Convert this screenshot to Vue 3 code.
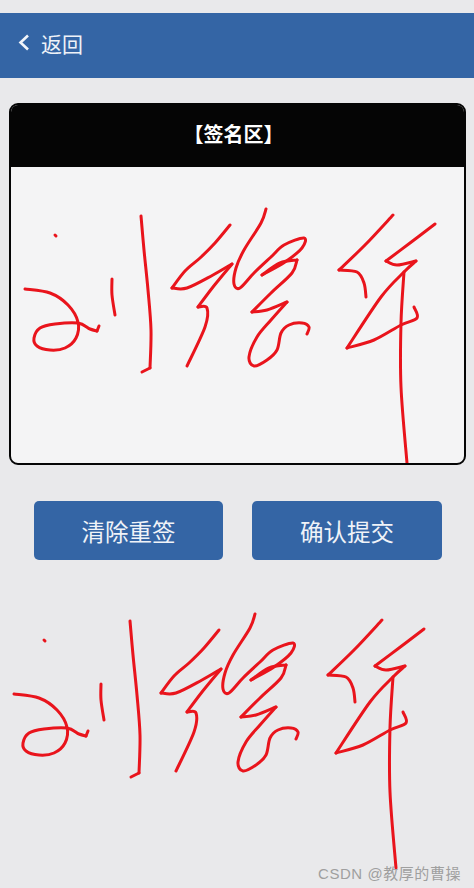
<script setup>
const strokes = [
  [[55,235],[56,236]],
  [[25,289],[50,293],[68,305],[78,322],[76,338],[65,348],[50,350],[37,346],[34,338],[40,328],[55,324],[78,323],[90,329],[97,331]],
  [[97,331],[99,326]],
  [[112,279],[112,295],[115,315]],
  [[141,216],[144,250],[148,290],[151,330],[150,368]],
  [[150,368],[142,372]],
  [[230,225],[215,243],[200,258],[185,271],[172,288]],
  [[172,288],[187,288],[213,275],[232,264]],
  [[232,264],[213,287],[198,307]],
  [[198,307],[207,308],[205,327],[187,366]],
  [[266,209],[261,223],[244,250],[236,268],[234,284],[240,288],[254,273],[271,257],[284,245],[304,238],[302,248],[285,262],[262,275]],
  [[262,275],[280,263],[297,260]],
  [[297,260],[292,273],[271,293],[252,312]],
  [[252,312],[267,310],[287,302]],
  [[287,302],[271,320],[257,337],[249,357],[254,366],[267,360],[277,350],[281,333],[289,325],[302,323],[309,327],[307,334]],
  [[393,215],[365,245],[339,270]],
  [[339,270],[357,272],[364,283],[366,297]],
  [[435,224],[410,243],[386,261]],
  [[386,261],[397,265],[416,261]],
  [[416,261],[404,272],[381,297],[347,348]],
  [[347,348],[374,340],[401,325],[417,318],[414,307]],
  [[404,272],[401,323],[401,387],[407,463]],
]

function toPath(pts) {
  let d = `M${pts[0][0]} ${pts[0][1]}`
  for (let i = 0; i < pts.length - 1; i++) {
    const p0 = pts[i - 1] || pts[i]
    const p1 = pts[i]
    const p2 = pts[i + 1]
    const p3 = pts[i + 2] || p2
    const c1x = p1[0] + (p2[0] - p0[0]) / 6
    const c1y = p1[1] + (p2[1] - p0[1]) / 6
    const c2x = p2[0] - (p3[0] - p1[0]) / 6
    const c2y = p2[1] - (p3[1] - p1[1]) / 6
    d += `C${c1x} ${c1y} ${c2x} ${c2y} ${p2[0]} ${p2[1]}`
  }
  return d
}

const signature = strokes.map(toPath)
</script>

<template>
  <div class="page">
    <header class="bar">
      <svg class="chevron" viewBox="0 0 12 17" aria-hidden="true">
        <path d="M10 1.5 2.5 8.5l7.5 7" />
      </svg>
      <span>返回</span>
    </header>

    <section class="card">
      <h1 class="card-title">【签名区】</h1>
      <svg class="sign-canvas" viewBox="11 167 453 296" aria-hidden="true">
        <path v-for="(d, i) in signature" :key="i" :d="d" />
      </svg>
    </section>

    <div class="actions">
      <button class="btn" type="button">清除重签</button>
      <button class="btn" type="button">确认提交</button>
    </div>

    <svg class="sign-result" viewBox="11 195 474 288" aria-hidden="true">
      <path v-for="(d, i) in signature" :key="i" :d="d" />
    </svg>

    <span class="mark">CSDN @教厚的曹操</span>
  </div>
</template>

<style>
html, body { margin: 0; background: #e9e9eb; }
</style>

<style scoped>
.page {
  position: relative;
  width: 474px;
  height: 888px;
  overflow: hidden;
  padding-top: 13px;
  box-sizing: border-box;
  background: #e9e9eb;
  font-family: "Liberation Sans", "Noto Sans CJK SC", sans-serif;
}
.bar {
  height: 65px;
  display: flex;
  align-items: center;
  gap: 11px;
  padding: 0 0 6px 18px;
  box-sizing: border-box;
  background: #3465a5;
  color: #eef2f8;
  font-size: 21px;
}
.chevron {
  width: 12px;
  height: 17px;
  fill: none;
  stroke: #f2f5fa;
  stroke-width: 2.6;
}
.card {
  margin: 25px 8px 0 9px;
  height: 362px;
  box-sizing: border-box;
  display: flex;
  flex-direction: column;
  border: 2px solid #050505;
  border-radius: 9px;
  overflow: hidden;
  background: #f4f4f5;
}
.card-title {
  margin: 0;
  height: 62px;
  flex: none;
  box-sizing: border-box;
  padding: 0 8px 6px 0;
  display: flex;
  align-items: center;
  justify-content: center;
  background: #050505;
  color: #fff;
  font-size: 20px;
  font-weight: 700;
}
.sign-canvas {
  display: block;
  width: 453px;
  height: 296px;
}
.sign-canvas path,
.sign-result path {
  fill: none;
  stroke: #e9141c;
  stroke-width: 3;
  stroke-linecap: round;
  stroke-linejoin: round;
}
.actions {
  display: grid;
  grid-template-columns: 189px 190px;
  gap: 29px;
  margin: 36px 0 0 34px;
}
.btn {
  height: 59px;
  padding: 0;
  border: 0;
  border-radius: 5px;
  background: #3465a5;
  color: #f0f3f8;
  font: inherit;
  font-size: 23.5px;
}
.sign-result {
  display: block;
  width: 474px;
  height: 288px;
  margin-top: 40px;
}
.mark {
  position: absolute;
  right: 13px;
  bottom: 5px;
  color: #9f9f9f;
  font-size: 15px;
  letter-spacing: 0.55px;
  white-space: nowrap;
}
</style>
